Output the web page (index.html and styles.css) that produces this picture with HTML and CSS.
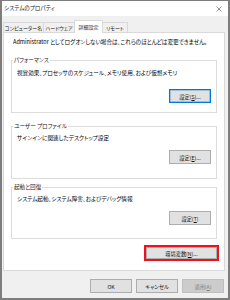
FILE: index.html
```html
<!DOCTYPE html>
<html lang="ja">
<head>
  <meta charset="UTF-8" />
  <title>システムのプロパティ</title>
  <link rel="stylesheet" href="styles.css">
</head>
<body>

  <div class="window">
    <div class="titlebar">
      <span class="title">システムのプロパティ</span>
      <svg class="close" width="6" height="6" viewBox="0 0 6 6">
        <path d="M0.5 0.5 L5.5 5.5 M5.5 0.5 L0.5 5.5" stroke="#666" stroke-width="0.7" fill="none" />
      </svg>
    </div>

    <div class="tabs">
      <div class="tab tab-name">コンピューター名</div>
      <div class="tab tab-hw">ハードウェア</div>
      <div class="tab tab-adv active">詳細設定</div>
      <div class="tab tab-remote">リモート</div>
    </div>

    <div class="panel">
      <div class="note">Administrator としてログオンしない場合は、これらのほとんどは変更できません。</div>

      <div class="group group-perf">
        <div class="group-title">パフォーマンス</div>
        <div class="group-desc">視覚効果、プロセッサのスケジュール、メモリ使用、および仮想メモリ</div>
        <button class="btn default">設定(<u>S</u>)...</button>
      </div>

      <div class="group group-profile">
        <div class="group-title">ユーザー プロファイル</div>
        <div class="group-desc">サインインに関連したデスクトップ設定</div>
        <button class="btn">設定(<u>E</u>)...</button>
      </div>

      <div class="group group-startup">
        <div class="group-title">起動と回復</div>
        <div class="group-desc">システム起動、システム障害、およびデバッグ情報</div>
        <button class="btn">設定(<u>T</u>)</button>
      </div>

      <div class="highlight">
        <button class="btn btn-env">環境変数(<u>N</u>)...</button>
      </div>
    </div>

    <div class="actions">
      <button class="btn">OK</button>
      <button class="btn">キャンセル</button>
      <button class="btn" disabled>適用(<u>A</u>)</button>
    </div>
  </div>

</body>
</html>
```

FILE: styles.css
```css
body {
  margin: 0;
  font-family: "Noto Sans CJK JP", sans-serif;
  font-size: 5.6px;
  line-height: 7px;
  color: #000;
  font-feature-settings: "palt";
}

.window {
  width: 230px;
  height: 300px;
  box-sizing: border-box;
  background: #f0f0f0;
  border: 2px solid #7d7d7d;
  border-top-width: 1px;
  display: flex;
  flex-direction: column;
}

.titlebar {
  height: 15px;
  background: #fff;
  display: flex;
  align-items: center;
  justify-content: space-between;
  padding: 0 6px 0 2px;
}

.title {
  color: #222;
}

.tabs {
  height: 16px;
  display: flex;
  align-items: flex-end;
  padding-left: 1px;
  font-size: 5px;
}

.tab {
  height: 10px;
  box-sizing: border-box;
  border: 1px solid #d9d9d9;
  border-bottom: none;
  margin-left: -1px;
  display: flex;
  align-items: center;
  justify-content: center;
  color: #111;
}

.tab:first-child {
  margin-left: 0;
}

.tab-name { width: 41px; }
.tab-hw { width: 32px; }
.tab-adv { width: 29px; }
.tab-remote { width: 26px; }

.tab.active {
  height: 13px;
  margin-bottom: -1px;
  padding-bottom: 1px;
  background: #fff;
  position: relative;
  z-index: 1;
}

.panel {
  height: 239px;
  box-sizing: border-box;
  margin: 0 3px 0 1px;
  background: #fff;
  border: 1px solid #d9d9d9;
  padding: 6px 7px 0 7px;
  display: flex;
  flex-direction: column;
}

.note {
  padding-left: 2px;
}

.group {
  height: 53px;
  box-sizing: border-box;
  border: 1px solid #dcdcdc;
  padding: 0 5px;
  display: flex;
  flex-direction: column;
}

.group-perf { margin-top: 14px; }
.group-profile { margin-top: 13px; }
.group-startup { margin-top: 8px; height: 52px; }

.group-title {
  width: fit-content;
  margin: -4px 0 0 -4px;
  padding: 0 1px;
  background: #fff;
  color: #222;
}

.group-desc {
  margin-top: 5px;
}

.group-perf .group-desc { margin-top: 6px; }

.group .btn {
  align-self: flex-end;
  margin-top: 8px;
}

.group-perf .btn { margin-top: 12px; }

.btn {
  width: 42px;
  height: 14px;
  box-sizing: border-box;
  padding: 0;
  font-family: inherit;
  font-size: 5.2px;
  line-height: 7px;
  font-feature-settings: "palt";
  color: #111;
  background: #e1e1e1;
  border: 1px solid #adadad;
}

.btn u {
  text-underline-offset: 1px;
}

.btn.default {
  border-color: #0078d7;
  box-shadow: inset 0 0 0 0.5px #5aa0e0;
}

.btn:disabled {
  background: #cccccc;
  border-color: #bfbfbf;
  color: #838383;
}

.highlight {
  align-self: flex-end;
  margin: 6px -2px 0 0;
  width: 75px;
  height: 16px;
  box-sizing: border-box;
  border: 2px solid #e8141e;
}

.btn-env {
  width: 71px;
  height: 12px;
  display: block;
}

.actions {
  display: flex;
  justify-content: flex-end;
  gap: 4px;
  padding: 8px 4px 0 0;
}
```
